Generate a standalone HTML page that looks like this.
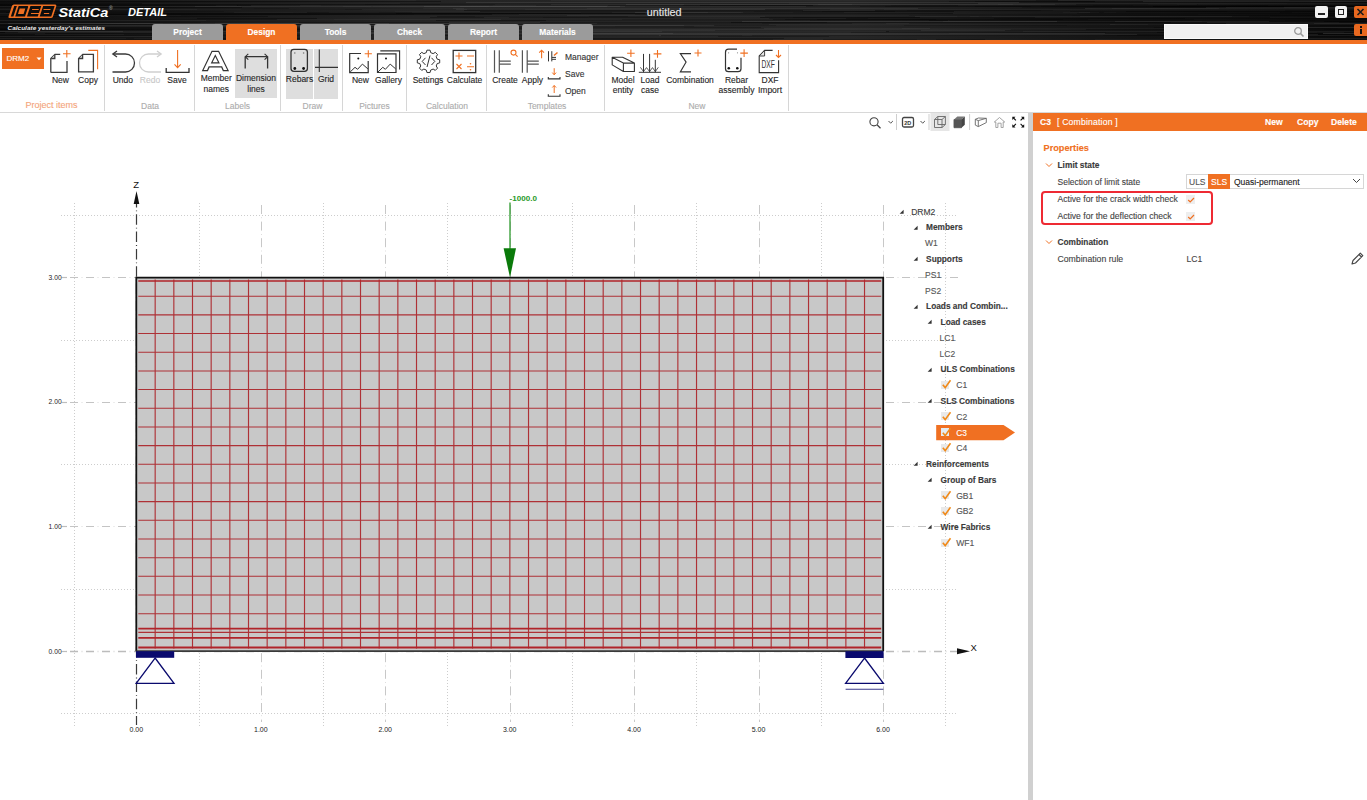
<!DOCTYPE html>
<html><head><meta charset="utf-8">
<style>
*{margin:0;padding:0;box-sizing:border-box}
html,body{width:1367px;height:800px;overflow:hidden;background:#fff;font-family:"Liberation Sans",sans-serif;color:#333}
.a{position:absolute}
.a div, div.a{-webkit-text-stroke:0.12px currentColor}
#title{left:0;top:0;width:1367px;height:40px;background:#1c1c1c;
 background-image:repeating-linear-gradient(180deg,rgba(255,255,255,0.06) 0px,rgba(255,255,255,0.0) 1px,rgba(0,0,0,0.25) 2px,rgba(255,255,255,0.04) 3px);}
#ostrip{left:0;top:40px;width:1367px;height:4px;background:#f07022}
.tab{top:24px;height:16px;width:71px;background:#9b9b9b;border-radius:3px 3px 0 0;color:#fff;font-weight:bold;font-size:8.4px;text-align:center;line-height:16.5px}
.tab.on{background:#f07022}
#ribbon{left:0;top:44px;width:1367px;height:68px;background:#fff}
.sep{top:45px;width:1px;height:65px;background:#d8d8d8}
.glab{top:100px;font-size:8.5px;color:#a8a8a8;text-align:center;height:11px;line-height:11px}
.bl{font-size:8.6px;color:#333;text-align:center;line-height:10.5px;white-space:nowrap}
.hl{background:#dedede}
#panelsep{left:1028px;top:112px;width:5px;height:688px;background:#cfcfcf}
#phead{left:1033px;top:113px;width:334px;height:18px;background:#f07022;color:#fff;font-size:8.6px;line-height:18px}
.pt{font-size:8.6px;color:#3a3a3a;white-space:nowrap;line-height:12px}
.pb{font-size:8.6px;font-weight:bold;color:#3a3a3a;white-space:nowrap;line-height:12px}
.tr{font-size:8.6px;color:#444;white-space:nowrap;line-height:12px}
.trb{font-size:8.6px;font-weight:bold;color:#3d3d3d;white-space:nowrap;line-height:12px}
</style></head><body>
<svg class="a" style="left:0;top:0" width="1367" height="40"><defs><linearGradient id="env" x1="0" x2="1" y1="0" y2="0"><stop offset="0" stop-color="#0e0e0e"/><stop offset="0.12" stop-color="#161616"/><stop offset="0.3" stop-color="#242424"/><stop offset="0.62" stop-color="#262626"/><stop offset="0.8" stop-color="#151515"/><stop offset="1" stop-color="#0a0a0a"/></linearGradient></defs><rect width="1367" height="40" fill="url(#env)"/><path d="M1285 20.5h325" stroke="#000" stroke-opacity="0.35"/><path d="M373 6.5h116" stroke="#fff" stroke-opacity="0.02"/><path d="M455 27.5h229" stroke="#fff" stroke-opacity="0.02"/><path d="M-6 36.5h218" stroke="#fff" stroke-opacity="0.08"/><path d="M718 36.5h111" stroke="#000" stroke-opacity="0.27"/><path d="M254 8.5h169" stroke="#000" stroke-opacity="0.19"/><path d="M-39 11.5h434" stroke="#000" stroke-opacity="0.13"/><path d="M684 4.5h464" stroke="#000" stroke-opacity="0.26"/><path d="M530 20.5h653" stroke="#000" stroke-opacity="0.17"/><path d="M895 11.5h231" stroke="#fff" stroke-opacity="0.05"/><path d="M943 21.5h259" stroke="#fff" stroke-opacity="0.03"/><path d="M58 26.5h292" stroke="#fff" stroke-opacity="0.05"/><path d="M998 4.5h435" stroke="#fff" stroke-opacity="0.04"/><path d="M731 22.5h440" stroke="#000" stroke-opacity="0.35"/><path d="M543 17.5h492" stroke="#000" stroke-opacity="0.31"/><path d="M1356 36.5h590" stroke="#000" stroke-opacity="0.22"/><path d="M-165 22.5h366" stroke="#000" stroke-opacity="0.14"/><path d="M142 3.5h258" stroke="#fff" stroke-opacity="0.04"/><path d="M-74 31.5h358" stroke="#fff" stroke-opacity="0.07"/><path d="M1154 27.5h253" stroke="#000" stroke-opacity="0.21"/><path d="M1301 24.5h174" stroke="#000" stroke-opacity="0.17"/><path d="M-181 14.5h595" stroke="#000" stroke-opacity="0.18"/><path d="M456 9.5h309" stroke="#fff" stroke-opacity="0.08"/><path d="M1289 32.5h486" stroke="#fff" stroke-opacity="0.05"/><path d="M415 35.5h327" stroke="#000" stroke-opacity="0.29"/><path d="M99 3.5h690" stroke="#000" stroke-opacity="0.13"/><path d="M-118 38.5h80" stroke="#000" stroke-opacity="0.13"/><path d="M762 23.5h124" stroke="#000" stroke-opacity="0.21"/><path d="M1297 16.5h453" stroke="#000" stroke-opacity="0.13"/><path d="M1356 31.5h369" stroke="#000" stroke-opacity="0.13"/><path d="M975 6.5h539" stroke="#000" stroke-opacity="0.31"/><path d="M-164 33.5h670" stroke="#fff" stroke-opacity="0.03"/><path d="M1232 34.5h550" stroke="#000" stroke-opacity="0.29"/><path d="M891 5.5h242" stroke="#000" stroke-opacity="0.15"/><path d="M635 14.5h563" stroke="#000" stroke-opacity="0.17"/><path d="M1063 12.5h587" stroke="#fff" stroke-opacity="0.03"/><path d="M572 33.5h533" stroke="#fff" stroke-opacity="0.07"/><path d="M206 30.5h509" stroke="#fff" stroke-opacity="0.05"/><path d="M1296 22.5h306" stroke="#000" stroke-opacity="0.17"/><path d="M329 12.5h379" stroke="#fff" stroke-opacity="0.06"/><path d="M551 0.5h485" stroke="#fff" stroke-opacity="0.03"/><path d="M1226 7.5h565" stroke="#fff" stroke-opacity="0.05"/><path d="M480 11.5h474" stroke="#000" stroke-opacity="0.38"/><path d="M526 25.5h541" stroke="#000" stroke-opacity="0.15"/><path d="M-157 8.5h446" stroke="#000" stroke-opacity="0.30"/><path d="M1095 39.5h688" stroke="#fff" stroke-opacity="0.04"/><path d="M659 35.5h93" stroke="#fff" stroke-opacity="0.06"/><path d="M625 6.5h659" stroke="#000" stroke-opacity="0.36"/><path d="M-156 13.5h212" stroke="#fff" stroke-opacity="0.07"/><path d="M206 20.5h340" stroke="#000" stroke-opacity="0.37"/><path d="M1207 22.5h491" stroke="#fff" stroke-opacity="0.05"/><path d="M5 32.5h174" stroke="#fff" stroke-opacity="0.07"/><path d="M754 11.5h561" stroke="#000" stroke-opacity="0.14"/><path d="M936 39.5h425" stroke="#000" stroke-opacity="0.26"/><path d="M556 35.5h561" stroke="#fff" stroke-opacity="0.02"/><path d="M234 12.5h559" stroke="#fff" stroke-opacity="0.05"/><path d="M495 4.5h460" stroke="#fff" stroke-opacity="0.05"/><path d="M509 17.5h411" stroke="#000" stroke-opacity="0.38"/><path d="M1174 33.5h664" stroke="#000" stroke-opacity="0.27"/><path d="M1116 12.5h165" stroke="#000" stroke-opacity="0.23"/><path d="M852 4.5h346" stroke="#000" stroke-opacity="0.19"/><path d="M1206 7.5h176" stroke="#fff" stroke-opacity="0.06"/><path d="M197 9.5h165" stroke="#000" stroke-opacity="0.32"/><path d="M424 6.5h382" stroke="#fff" stroke-opacity="0.07"/><path d="M907 10.5h696" stroke="#000" stroke-opacity="0.23"/><path d="M299 22.5h528" stroke="#000" stroke-opacity="0.27"/><path d="M902 28.5h318" stroke="#fff" stroke-opacity="0.04"/><path d="M-23 4.5h649" stroke="#000" stroke-opacity="0.36"/><path d="M216 5.5h105" stroke="#fff" stroke-opacity="0.04"/><path d="M1085 8.5h607" stroke="#fff" stroke-opacity="0.08"/><path d="M34 25.5h650" stroke="#fff" stroke-opacity="0.06"/><path d="M237 5.5h576" stroke="#000" stroke-opacity="0.37"/><path d="M1270 17.5h473" stroke="#fff" stroke-opacity="0.03"/><path d="M-96 14.5h615" stroke="#000" stroke-opacity="0.20"/><path d="M455 35.5h648" stroke="#fff" stroke-opacity="0.02"/><path d="M1270 15.5h681" stroke="#000" stroke-opacity="0.15"/><path d="M785 19.5h409" stroke="#000" stroke-opacity="0.23"/><path d="M224 11.5h578" stroke="#fff" stroke-opacity="0.02"/><path d="M949 1.5h422" stroke="#000" stroke-opacity="0.24"/><path d="M-33 28.5h588" stroke="#000" stroke-opacity="0.25"/><path d="M1320 25.5h271" stroke="#000" stroke-opacity="0.17"/><path d="M1104 12.5h518" stroke="#fff" stroke-opacity="0.04"/><path d="M1339 22.5h599" stroke="#000" stroke-opacity="0.29"/><path d="M475 16.5h114" stroke="#fff" stroke-opacity="0.04"/><path d="M851 32.5h255" stroke="#000" stroke-opacity="0.19"/><path d="M90 29.5h247" stroke="#000" stroke-opacity="0.21"/><path d="M1324 21.5h419" stroke="#000" stroke-opacity="0.39"/><path d="M141 19.5h193" stroke="#000" stroke-opacity="0.13"/><path d="M588 17.5h205" stroke="#fff" stroke-opacity="0.02"/><path d="M1080 16.5h169" stroke="#fff" stroke-opacity="0.04"/><path d="M277 19.5h224" stroke="#fff" stroke-opacity="0.05"/><path d="M830 9.5h524" stroke="#fff" stroke-opacity="0.04"/><path d="M929 20.5h386" stroke="#000" stroke-opacity="0.29"/><path d="M-131 9.5h598" stroke="#fff" stroke-opacity="0.06"/><path d="M18 32.5h405" stroke="#fff" stroke-opacity="0.07"/><path d="M1095 1.5h442" stroke="#fff" stroke-opacity="0.06"/><path d="M-67 14.5h106" stroke="#fff" stroke-opacity="0.08"/><path d="M1110 24.5h426" stroke="#fff" stroke-opacity="0.06"/><path d="M567 15.5h82" stroke="#fff" stroke-opacity="0.06"/><path d="M1207 32.5h137" stroke="#fff" stroke-opacity="0.06"/><path d="M195 30.5h126" stroke="#000" stroke-opacity="0.32"/><path d="M162 13.5h483" stroke="#000" stroke-opacity="0.35"/><path d="M551 4.5h504" stroke="#fff" stroke-opacity="0.06"/><path d="M-79 12.5h171" stroke="#000" stroke-opacity="0.32"/><path d="M773 19.5h163" stroke="#000" stroke-opacity="0.25"/><path d="M885 6.5h499" stroke="#000" stroke-opacity="0.25"/><path d="M530 29.5h556" stroke="#fff" stroke-opacity="0.05"/><path d="M1333 19.5h660" stroke="#000" stroke-opacity="0.24"/><path d="M1317 32.5h359" stroke="#000" stroke-opacity="0.16"/><path d="M-83 13.5h136" stroke="#fff" stroke-opacity="0.04"/><path d="M8 23.5h589" stroke="#fff" stroke-opacity="0.07"/><path d="M163 23.5h637" stroke="#000" stroke-opacity="0.11"/><path d="M1289 0.5h503" stroke="#000" stroke-opacity="0.32"/><path d="M339 26.5h276" stroke="#fff" stroke-opacity="0.02"/><path d="M1115 21.5h154" stroke="#fff" stroke-opacity="0.06"/><path d="M197 18.5h120" stroke="#000" stroke-opacity="0.36"/><path d="M365 4.5h345" stroke="#000" stroke-opacity="0.11"/><path d="M-119 6.5h490" stroke="#fff" stroke-opacity="0.03"/><path d="M484 17.5h276" stroke="#fff" stroke-opacity="0.07"/><path d="M1186 27.5h583" stroke="#fff" stroke-opacity="0.07"/><path d="M661 35.5h526" stroke="#000" stroke-opacity="0.32"/><path d="M764 28.5h166" stroke="#fff" stroke-opacity="0.05"/><path d="M-1 35.5h373" stroke="#000" stroke-opacity="0.19"/><path d="M437 16.5h228" stroke="#000" stroke-opacity="0.30"/><path d="M62 7.5h180" stroke="#000" stroke-opacity="0.37"/><path d="M662 31.5h361" stroke="#000" stroke-opacity="0.33"/><path d="M19 27.5h199" stroke="#000" stroke-opacity="0.20"/><path d="M300 5.5h308" stroke="#fff" stroke-opacity="0.03"/><path d="M975 1.5h336" stroke="#000" stroke-opacity="0.26"/><path d="M223 24.5h546" stroke="#000" stroke-opacity="0.27"/><path d="M-3 23.5h392" stroke="#fff" stroke-opacity="0.07"/><path d="M-55 13.5h636" stroke="#000" stroke-opacity="0.29"/><path d="M1295 27.5h606" stroke="#fff" stroke-opacity="0.02"/><path d="M466 2.5h553" stroke="#fff" stroke-opacity="0.08"/><path d="M-200 31.5h323" stroke="#fff" stroke-opacity="0.07"/><path d="M1324 29.5h234" stroke="#000" stroke-opacity="0.15"/><path d="M1323 33.5h148" stroke="#fff" stroke-opacity="0.06"/><path d="M-67 29.5h562" stroke="#000" stroke-opacity="0.14"/><path d="M1242 36.5h480" stroke="#000" stroke-opacity="0.14"/><path d="M628 16.5h351" stroke="#fff" stroke-opacity="0.03"/><path d="M622 19.5h441" stroke="#000" stroke-opacity="0.17"/><path d="M-198 38.5h413" stroke="#fff" stroke-opacity="0.04"/><path d="M810 20.5h628" stroke="#000" stroke-opacity="0.17"/><path d="M-154 15.5h335" stroke="#fff" stroke-opacity="0.02"/><path d="M581 12.5h498" stroke="#000" stroke-opacity="0.18"/><path d="M1250 27.5h221" stroke="#000" stroke-opacity="0.20"/><path d="M368 26.5h326" stroke="#000" stroke-opacity="0.19"/><path d="M-94 32.5h387" stroke="#000" stroke-opacity="0.33"/><path d="M162 12.5h217" stroke="#fff" stroke-opacity="0.04"/><path d="M577 39.5h196" stroke="#000" stroke-opacity="0.23"/><path d="M1287 3.5h171" stroke="#000" stroke-opacity="0.16"/><path d="M22 38.5h112" stroke="#000" stroke-opacity="0.22"/><path d="M948 20.5h698" stroke="#fff" stroke-opacity="0.04"/><path d="M822 11.5h405" stroke="#000" stroke-opacity="0.19"/><path d="M1115 24.5h691" stroke="#000" stroke-opacity="0.13"/><path d="M238 5.5h298" stroke="#fff" stroke-opacity="0.03"/><path d="M396 13.5h557" stroke="#000" stroke-opacity="0.34"/><path d="M-123 5.5h374" stroke="#000" stroke-opacity="0.38"/><path d="M307 12.5h537" stroke="#000" stroke-opacity="0.29"/><path d="M1072 15.5h555" stroke="#000" stroke-opacity="0.11"/><path d="M1059 4.5h118" stroke="#000" stroke-opacity="0.12"/><path d="M331 38.5h249" stroke="#fff" stroke-opacity="0.06"/><path d="M970 16.5h508" stroke="#fff" stroke-opacity="0.04"/><path d="M1236 38.5h473" stroke="#fff" stroke-opacity="0.02"/><path d="M-32 14.5h524" stroke="#000" stroke-opacity="0.33"/><path d="M1232 16.5h585" stroke="#000" stroke-opacity="0.25"/><path d="M1058 0.5h538" stroke="#fff" stroke-opacity="0.07"/><path d="M170 38.5h614" stroke="#000" stroke-opacity="0.34"/><path d="M-76 38.5h202" stroke="#fff" stroke-opacity="0.03"/><path d="M818 4.5h379" stroke="#fff" stroke-opacity="0.03"/><path d="M1184 27.5h692" stroke="#000" stroke-opacity="0.13"/><path d="M460 6.5h693" stroke="#fff" stroke-opacity="0.03"/><path d="M453 8.5h465" stroke="#fff" stroke-opacity="0.06"/><path d="M1022 7.5h262" stroke="#000" stroke-opacity="0.18"/><path d="M957 16.5h203" stroke="#000" stroke-opacity="0.17"/><path d="M241 9.5h643" stroke="#000" stroke-opacity="0.12"/><path d="M1355 16.5h395" stroke="#000" stroke-opacity="0.34"/><path d="M1353 29.5h143" stroke="#000" stroke-opacity="0.35"/><path d="M1233 28.5h105" stroke="#000" stroke-opacity="0.14"/><path d="M741 12.5h593" stroke="#000" stroke-opacity="0.12"/><path d="M1157 32.5h358" stroke="#000" stroke-opacity="0.33"/><path d="M-34 0.5h450" stroke="#fff" stroke-opacity="0.03"/><path d="M333 23.5h107" stroke="#fff" stroke-opacity="0.02"/><path d="M1077 13.5h588" stroke="#000" stroke-opacity="0.21"/><path d="M289 39.5h206" stroke="#fff" stroke-opacity="0.05"/><path d="M440 4.5h573" stroke="#fff" stroke-opacity="0.03"/><path d="M-57 34.5h181" stroke="#fff" stroke-opacity="0.04"/><path d="M846 18.5h339" stroke="#000" stroke-opacity="0.32"/><path d="M449 22.5h91" stroke="#fff" stroke-opacity="0.07"/><path d="M412 12.5h331" stroke="#fff" stroke-opacity="0.05"/><path d="M464 10.5h589" stroke="#000" stroke-opacity="0.36"/><path d="M1011 29.5h161" stroke="#000" stroke-opacity="0.14"/><path d="M-60 25.5h466" stroke="#000" stroke-opacity="0.25"/><path d="M345 9.5h180" stroke="#000" stroke-opacity="0.12"/><path d="M569 24.5h579" stroke="#fff" stroke-opacity="0.03"/><path d="M1112 8.5h107" stroke="#fff" stroke-opacity="0.04"/><path d="M1251 38.5h320" stroke="#fff" stroke-opacity="0.06"/><path d="M803 10.5h611" stroke="#fff" stroke-opacity="0.06"/><path d="M1099 12.5h193" stroke="#000" stroke-opacity="0.22"/><path d="M45 33.5h303" stroke="#000" stroke-opacity="0.39"/><path d="M-136 12.5h429" stroke="#fff" stroke-opacity="0.02"/><path d="M-16 20.5h452" stroke="#fff" stroke-opacity="0.06"/><path d="M817 19.5h271" stroke="#000" stroke-opacity="0.22"/><path d="M500 23.5h352" stroke="#000" stroke-opacity="0.29"/><path d="M529 31.5h357" stroke="#fff" stroke-opacity="0.07"/><path d="M1070 11.5h328" stroke="#000" stroke-opacity="0.21"/><path d="M-56 23.5h354" stroke="#fff" stroke-opacity="0.02"/><path d="M-71 8.5h535" stroke="#fff" stroke-opacity="0.05"/><path d="M978 3.5h635" stroke="#fff" stroke-opacity="0.07"/><path d="M1143 1.5h698" stroke="#fff" stroke-opacity="0.07"/><path d="M6 12.5h629" stroke="#000" stroke-opacity="0.34"/><path d="M875 10.5h527" stroke="#000" stroke-opacity="0.35"/><path d="M985 39.5h178" stroke="#fff" stroke-opacity="0.04"/><path d="M25 29.5h391" stroke="#fff" stroke-opacity="0.03"/><path d="M765 16.5h227" stroke="#000" stroke-opacity="0.16"/><path d="M53 25.5h661" stroke="#fff" stroke-opacity="0.07"/><path d="M1041 10.5h244" stroke="#fff" stroke-opacity="0.02"/><path d="M1314 23.5h361" stroke="#fff" stroke-opacity="0.06"/><path d="M195 6.5h412" stroke="#fff" stroke-opacity="0.06"/><path d="M215 23.5h694" stroke="#fff" stroke-opacity="0.04"/><path d="M493 5.5h190" stroke="#fff" stroke-opacity="0.02"/><path d="M197 33.5h476" stroke="#fff" stroke-opacity="0.06"/><path d="M949 20.5h543" stroke="#000" stroke-opacity="0.19"/><path d="M455 27.5h306" stroke="#000" stroke-opacity="0.25"/><path d="M823 39.5h94" stroke="#000" stroke-opacity="0.21"/><path d="M620 6.5h411" stroke="#000" stroke-opacity="0.19"/><path d="M120 8.5h467" stroke="#000" stroke-opacity="0.14"/><path d="M909 15.5h360" stroke="#000" stroke-opacity="0.14"/><path d="M430 17.5h244" stroke="#000" stroke-opacity="0.29"/><path d="M1199 35.5h449" stroke="#fff" stroke-opacity="0.06"/><path d="M949 33.5h234" stroke="#fff" stroke-opacity="0.02"/><path d="M-160 34.5h195" stroke="#000" stroke-opacity="0.37"/><path d="M-181 6.5h422" stroke="#fff" stroke-opacity="0.03"/><path d="M612 12.5h478" stroke="#fff" stroke-opacity="0.04"/><path d="M74 39.5h272" stroke="#000" stroke-opacity="0.11"/><path d="M921 30.5h84" stroke="#fff" stroke-opacity="0.06"/><path d="M-74 29.5h486" stroke="#000" stroke-opacity="0.40"/><path d="M164 16.5h104" stroke="#000" stroke-opacity="0.32"/><path d="M915 16.5h245" stroke="#fff" stroke-opacity="0.05"/><path d="M1323 33.5h263" stroke="#fff" stroke-opacity="0.07"/><path d="M1179 5.5h89" stroke="#000" stroke-opacity="0.17"/><path d="M1280 12.5h543" stroke="#000" stroke-opacity="0.36"/><path d="M742 21.5h315" stroke="#fff" stroke-opacity="0.08"/><path d="M536 34.5h601" stroke="#fff" stroke-opacity="0.07"/><path d="M1298 27.5h225" stroke="#fff" stroke-opacity="0.07"/><path d="M776 25.5h128" stroke="#fff" stroke-opacity="0.03"/><path d="M-25 1.5h466" stroke="#000" stroke-opacity="0.39"/><path d="M-152 1.5h166" stroke="#fff" stroke-opacity="0.02"/><path d="M955 4.5h121" stroke="#fff" stroke-opacity="0.04"/><path d="M1197 34.5h121" stroke="#fff" stroke-opacity="0.07"/><path d="M-32 24.5h208" stroke="#000" stroke-opacity="0.11"/><path d="M1093 5.5h472" stroke="#000" stroke-opacity="0.13"/><path d="M1041 6.5h481" stroke="#000" stroke-opacity="0.20"/><path d="M-167 16.5h239" stroke="#000" stroke-opacity="0.31"/><path d="M1226 23.5h557" stroke="#fff" stroke-opacity="0.05"/><path d="M769 18.5h99" stroke="#000" stroke-opacity="0.23"/><path d="M343 6.5h517" stroke="#fff" stroke-opacity="0.03"/><path d="M700 5.5h258" stroke="#000" stroke-opacity="0.26"/><path d="M994 18.5h686" stroke="#000" stroke-opacity="0.25"/><path d="M889 31.5h592" stroke="#fff" stroke-opacity="0.06"/></svg>

<svg class="a" style="left:0;top:0" width="200" height="40">
 <g transform="skewX(-18)" fill="#0d0d0d">
  <rect x="13.85" y="4.6" width="44.45" height="13.4" rx="1.6" fill="#f07022"/>
  <rect x="16.2" y="6" width="2.6" height="10.6"/>
  <path d="M20.6 6h8.8a1 1 0 0 1 1 1v9.6H20.6z M22.5 8.6v5.3h5.6V8.6z" fill-rule="evenodd"/>
  <path d="M32.4 6h10.8v10.6H32.4z M35.2 9v1.1h6.6V9z M35.4 13v1.1h7.8V13z" fill-rule="evenodd"/>
  <path d="M45.1 6h11.5v10.6H45.1z M46.6 9v1.1h7V9z M48.3 13v1.1h5.3V13z" fill-rule="evenodd"/>
 </g>
 <text x="58.4" y="16.7" font-family="Liberation Sans" font-weight="bold" font-style="italic" font-size="13.6" fill="#fff" textLength="50" lengthAdjust="spacingAndGlyphs">StatiCa</text>
 <text x="109" y="10" font-family="Liberation Sans" font-size="5" fill="#bbb">®</text>
 <text x="128" y="15.8" font-family="Liberation Sans" font-weight="bold" font-style="italic" font-size="10.5" fill="#fff" textLength="39" lengthAdjust="spacingAndGlyphs">DETAIL</text>
 <text x="7.5" y="29.6" font-family="Liberation Sans" font-weight="bold" font-style="italic" font-size="6" fill="#e8e8e8" textLength="97.5" lengthAdjust="spacingAndGlyphs">Calculate yesterday's estimates</text>
</svg>
<div class="a" style="left:646.8px;top:5.8px;font-size:10.8px;color:#e6e6e6;line-height:13px">untitled</div>
<div class="a tab" style="left:152px">Project</div>
<div class="a tab on" style="left:226px">Design</div>
<div class="a tab" style="left:300px">Tools</div>
<div class="a tab" style="left:374px">Check</div>
<div class="a tab" style="left:448px">Report</div>
<div class="a tab" style="left:522px">Materials</div>
<div class="a" style="left:1315px;top:6px;width:13px;height:12px;background:#f2f2f2;border-radius:2px"><div class="a" style="left:3px;top:7px;width:7px;height:2px;background:#222"></div></div>
<div class="a" style="left:1335px;top:6px;width:12px;height:12px;background:#f2f2f2;border-radius:2px"><div class="a" style="left:3px;top:3px;width:6px;height:6px;border:1.5px solid #222"></div></div>
<div class="a" style="left:1354px;top:6px;width:13px;height:12px;background:#e8681f;border-radius:2px 0 0 2px"><svg class="a" style="left:0;top:0" width="13" height="12"><path d="M3.5 3L9.5 9M9.5 3L3.5 9" stroke="#1a1a1a" stroke-width="1.6"/></svg></div>
<div class="a" style="left:1164px;top:24px;width:144px;height:15px;background:#f0f0f0;border:1px solid #fafafa"><svg class="a" style="left:128px;top:1px" width="12" height="12"><circle cx="5" cy="5" r="3.3" fill="none" stroke="#9a9a9a" stroke-width="1.3"/><path d="M7.5 7.5L10.5 10.5" stroke="#9a9a9a" stroke-width="1.6"/></svg></div>
<div class="a" style="left:1354px;top:24px;width:13px;height:12px;background:#e8681f;border-radius:2px 0 0 2px"><div class="a" style="left:5.5px;top:2px;width:2px;height:2px;background:#111"></div><div class="a" style="left:5.5px;top:5px;width:2px;height:5px;background:#111"></div></div>
<div id="ostrip" class="a"></div>
<div id="ribbon" class="a"></div>
<div class="a" style="left:235px;top:49px;width:42px;height:49px;background:#dedede"></div>
<div class="a" style="left:286px;top:49px;width:27px;height:50px;background:#dedede"></div>
<div class="a" style="left:314px;top:49px;width:24px;height:50px;background:#dedede"></div>
<div class="a" style="left:104px;top:45px;width:1px;height:66px;background:#d6d6d6"></div>
<div class="a" style="left:194px;top:45px;width:1px;height:66px;background:#d6d6d6"></div>
<div class="a" style="left:280px;top:45px;width:1px;height:66px;background:#d6d6d6"></div>
<div class="a" style="left:342px;top:45px;width:1px;height:66px;background:#d6d6d6"></div>
<div class="a" style="left:406px;top:45px;width:1px;height:66px;background:#d6d6d6"></div>
<div class="a" style="left:486px;top:45px;width:1px;height:66px;background:#d6d6d6"></div>
<div class="a" style="left:604px;top:45px;width:1px;height:66px;background:#d6d6d6"></div>
<div class="a" style="left:788px;top:45px;width:1px;height:66px;background:#d6d6d6"></div>
<div class="a" style="left:2px;top:48px;width:42px;height:21px;background:#f07022"></div>
<div class="a" style="left:6.5px;top:53.5px;font-size:8.0px;color:#fff;line-height:10.00px;white-space:nowrap;">DRM2</div>
<svg class="a" style="left:36px;top:57px" width="6" height="4"><path d="M0.5 0.5h5l-2.5 2.8z" fill="#fff"/></svg>
<div class="a" style="left:10.5px;top:74.5px;font-size:8.5px;color:#262626;line-height:10.62px;white-space:nowrap;width:100px;text-align:center;">New</div>
<div class="a" style="left:38px;top:74.5px;font-size:8.5px;color:#262626;line-height:10.62px;white-space:nowrap;width:100px;text-align:center;">Copy</div>
<div class="a" style="left:72.8px;top:74.5px;font-size:8.5px;color:#262626;line-height:10.62px;white-space:nowrap;width:100px;text-align:center;">Undo</div>
<div class="a" style="left:100px;top:74.5px;font-size:8.5px;color:#c8c8c8;line-height:10.62px;white-space:nowrap;width:100px;text-align:center;">Redo</div>
<div class="a" style="left:127px;top:74.5px;font-size:8.5px;color:#262626;line-height:10.62px;white-space:nowrap;width:100px;text-align:center;">Save</div>
<div class="a" style="left:166.3px;top:73px;font-size:8.5px;color:#262626;line-height:10.62px;white-space:nowrap;width:100px;text-align:center;">Member</div>
<div class="a" style="left:166.3px;top:84.2px;font-size:8.5px;color:#262626;line-height:10.62px;white-space:nowrap;width:100px;text-align:center;">names</div>
<div class="a" style="left:206px;top:73px;font-size:8.5px;color:#262626;line-height:10.62px;white-space:nowrap;width:100px;text-align:center;">Dimension</div>
<div class="a" style="left:206px;top:84.2px;font-size:8.5px;color:#262626;line-height:10.62px;white-space:nowrap;width:100px;text-align:center;">lines</div>
<div class="a" style="left:249.5px;top:73.5px;font-size:8.5px;color:#262626;line-height:10.62px;white-space:nowrap;width:100px;text-align:center;">Rebars</div>
<div class="a" style="left:276px;top:73.5px;font-size:8.5px;color:#262626;line-height:10.62px;white-space:nowrap;width:100px;text-align:center;">Grid</div>
<div class="a" style="left:310.5px;top:74.8px;font-size:8.5px;color:#262626;line-height:10.62px;white-space:nowrap;width:100px;text-align:center;">New</div>
<div class="a" style="left:338.5px;top:74.8px;font-size:8.5px;color:#262626;line-height:10.62px;white-space:nowrap;width:100px;text-align:center;">Gallery</div>
<div class="a" style="left:378px;top:75px;font-size:8.5px;color:#262626;line-height:10.62px;white-space:nowrap;width:100px;text-align:center;">Settings</div>
<div class="a" style="left:414.5px;top:75px;font-size:8.5px;color:#262626;line-height:10.62px;white-space:nowrap;width:100px;text-align:center;">Calculate</div>
<div class="a" style="left:455px;top:74.7px;font-size:8.5px;color:#262626;line-height:10.62px;white-space:nowrap;width:100px;text-align:center;">Create</div>
<div class="a" style="left:482.5px;top:74.7px;font-size:8.5px;color:#262626;line-height:10.62px;white-space:nowrap;width:100px;text-align:center;">Apply</div>
<div class="a" style="left:565px;top:52px;font-size:8.5px;color:#333;line-height:10.62px;white-space:nowrap;">Manager</div>
<div class="a" style="left:565px;top:69px;font-size:8.5px;color:#333;line-height:10.62px;white-space:nowrap;">Save</div>
<div class="a" style="left:565px;top:86px;font-size:8.5px;color:#333;line-height:10.62px;white-space:nowrap;">Open</div>
<div class="a" style="left:573px;top:74.5px;font-size:8.5px;color:#262626;line-height:10.62px;white-space:nowrap;width:100px;text-align:center;">Model</div>
<div class="a" style="left:573px;top:85.2px;font-size:8.5px;color:#262626;line-height:10.62px;white-space:nowrap;width:100px;text-align:center;">entity</div>
<div class="a" style="left:600px;top:74.5px;font-size:8.5px;color:#262626;line-height:10.62px;white-space:nowrap;width:100px;text-align:center;">Load</div>
<div class="a" style="left:600px;top:85.2px;font-size:8.5px;color:#262626;line-height:10.62px;white-space:nowrap;width:100px;text-align:center;">case</div>
<div class="a" style="left:640px;top:74.5px;font-size:8.5px;color:#262626;line-height:10.62px;white-space:nowrap;width:100px;text-align:center;">Combination</div>
<div class="a" style="left:686.5px;top:74.5px;font-size:8.5px;color:#262626;line-height:10.62px;white-space:nowrap;width:100px;text-align:center;">Rebar</div>
<div class="a" style="left:686.5px;top:85.2px;font-size:8.5px;color:#262626;line-height:10.62px;white-space:nowrap;width:100px;text-align:center;">assembly</div>
<div class="a" style="left:720px;top:74.5px;font-size:8.5px;color:#262626;line-height:10.62px;white-space:nowrap;width:100px;text-align:center;">DXF</div>
<div class="a" style="left:720px;top:85.2px;font-size:8.5px;color:#262626;line-height:10.62px;white-space:nowrap;width:100px;text-align:center;">Import</div>
<div class="a" style="left:1.5px;top:100.0px;font-size:9.0px;color:#f4a47a;line-height:11.25px;white-space:nowrap;width:100px;text-align:center;">Project items</div>
<div class="a" style="left:100px;top:100.5px;font-size:8.5px;color:#acacac;line-height:10.62px;white-space:nowrap;width:100px;text-align:center;">Data</div>
<div class="a" style="left:187.5px;top:100.5px;font-size:8.5px;color:#acacac;line-height:10.62px;white-space:nowrap;width:100px;text-align:center;">Labels</div>
<div class="a" style="left:262.5px;top:100.5px;font-size:8.5px;color:#acacac;line-height:10.62px;white-space:nowrap;width:100px;text-align:center;">Draw</div>
<div class="a" style="left:324.5px;top:100.5px;font-size:8.5px;color:#acacac;line-height:10.62px;white-space:nowrap;width:100px;text-align:center;">Pictures</div>
<div class="a" style="left:397px;top:100.5px;font-size:8.5px;color:#acacac;line-height:10.62px;white-space:nowrap;width:100px;text-align:center;">Calculation</div>
<div class="a" style="left:497px;top:100.5px;font-size:8.5px;color:#acacac;line-height:10.62px;white-space:nowrap;width:100px;text-align:center;">Templates</div>
<div class="a" style="left:647px;top:100.5px;font-size:8.5px;color:#acacac;line-height:10.62px;white-space:nowrap;width:100px;text-align:center;">New</div>
<svg class="a" style="left:0;top:44px" width="800" height="60" fill="none" stroke-linecap="butt">
<g stroke="#3c3c3c" stroke-width="1.3">
 <!-- New doc -->
 <path d="M50.8 28.4V14.6l4.2-4.3h5.2"/><path d="M50.8 28.4h16.2V17"/><path d="M51.2 14.5h3.6v-3.8" fill="#ddd"/>
 <!-- Copy doc -->
 <path d="M78.6 27.8V14.6l4.2-4.3h10.6v17.5z"/><path d="M79 14.5h3.6v-3.8" fill="#ddd"/>
</g>
<g stroke="#f07022" stroke-width="1.1">
 <path d="M66.8 6v7.6M63 9.8h7.6"/>
 <path d="M88.3 6.4h9.3v18.8"/>
</g>
<!-- Undo -->
<path d="M113 10h12.5a9 9 0 0 1 0 18H112.5" stroke="#3a3a3a" stroke-width="1.3"/>
<path d="M117 6.9l-4.2 3.1 4.2 3.1" stroke="#3a3a3a" stroke-width="1.3"/>
<!-- Redo -->
<path d="M161 10h-12.5a9 9 0 0 0 0 18H161" stroke="#cfcfcf" stroke-width="1.3"/>
<path d="M157 6.9l4.2 3.1-4.2 3.1" stroke="#cfcfcf" stroke-width="1.3"/>
<!-- Save -->
<path d="M177.6 6v17.5M174.5 20.3l3.1 3.4 3.1-3.4" stroke="#f07022" stroke-width="1.1"/>
<path d="M166.2 24v4.3h22.8V24" stroke="#333" stroke-width="1.3"/>
<!-- A -->
<path d="M212 7.3h6.6l9.5 19.3h-4.8l-1.6-3.7h-12.6l-1.6 3.7h-4.8z M211.7 18.8h7.2l-3.6-7.2z" stroke="#333" stroke-width="1.2"/>
<!-- Dimension -->
<path d="M245.2 12.7v11.8M267.6 12.7v11.8M245.2 12.7h22.4" stroke="#333" stroke-width="1.3"/>
<path d="M248.3 9.8l-3 2.9 3 2.9M264.6 9.8l3 2.9-3 2.9" stroke="#333" stroke-width="1.1"/>
<!-- Rebars -->
<rect x="291" y="5.3" width="16.4" height="22" rx="2.8" stroke="#333" stroke-width="1.3"/>
<circle cx="294.8" cy="9" r="0.8" fill="#777" stroke="none"/><circle cx="303.6" cy="9" r="0.8" fill="#777" stroke="none"/>
<circle cx="294.8" cy="24.5" r="1.4" fill="#111" stroke="none"/><circle cx="303.6" cy="24.5" r="1.4" fill="#111" stroke="none"/>
<!-- Grid -->
<path d="M319.3 5.5v22.5M315 23.4h23" stroke="#333" stroke-width="1.1"/>
<!-- Picture New -->
<path d="M361 9.5h-11.3v19.2h18.5V17" stroke="#333" stroke-width="1.2"/>
<path d="M350.2 28l4.8-4.7 2.6 2 4.8-5.2 5.5 4.8" stroke="#333" stroke-width="1.0"/>
<circle cx="358.3" cy="14.5" r="1" fill="#111" stroke="none"/>
<path d="M368.3 6.2v7.2M364.7 9.8h7.2" stroke="#f07022" stroke-width="1.1"/>
<path d="M377.5 9.8h18.5v18.7h-18.5z" stroke="#333" stroke-width="1.2"/>
<path d="M380.3 6.9h19.3v18.7" stroke="#333" stroke-width="1.1"/>
<path d="M378 28l4.8-4.7 2.6 2 4.8-5.2 5.5 4.8" stroke="#333" stroke-width="1.0"/>
<circle cx="386" cy="14.5" r="1" fill="#111" stroke="none"/>
<!-- Settings gear -->
<path d="M437.23 15.17 L439.69 15.78 L439.69 18.92 L437.23 19.53 L436.21 21.99 L437.52 24.15 L435.30 26.37 L433.14 25.06 L430.68 26.08 L430.07 28.54 L426.93 28.54 L426.32 26.08 L423.86 25.06 L421.70 26.37 L419.48 24.15 L420.79 21.99 L419.77 19.53 L417.31 18.92 L417.31 15.78 L419.77 15.17 L420.79 12.71 L419.48 10.55 L421.70 8.33 L423.86 9.64 L426.32 8.62 L426.93 6.16 L430.07 6.16 L430.68 8.62 L433.14 9.64 L435.30 8.33 L437.52 10.55 L436.21 12.71Z" stroke="#333" stroke-width="1.0" stroke-linejoin="round"/>
<path d="M425.5 13.8l-3.3 3.6 3.3 3.6M431.5 13.8l3.3 3.6-3.3 3.6M430 11.5l-3 11.5" stroke="#333" stroke-width="1.0"/>
<!-- Calculate -->
<rect x="453.2" y="6.4" width="22.5" height="22.2" stroke="#333" stroke-width="1.3"/>
<path d="M455.5 12h7M459 8.5v7M467 12h7M456.5 20l5 5M461.5 20l-5 5M467 22.7h7" stroke="#f07022" stroke-width="1.1"/>
<circle cx="470.5" cy="19.8" r="0.8" fill="#f07022" stroke="none"/><circle cx="470.5" cy="25.8" r="0.8" fill="#f07022" stroke="none"/>
<!-- Create -->
<path d="M494.5 6.2v22.5M499.3 6.2v22.5M499.3 17.2h11.5M499.3 20.2h11.5" stroke="#555" stroke-width="1.2"/>
<circle cx="513.5" cy="8.6" r="2.5" stroke="#f07022" stroke-width="1.1"/><path d="M515.3 10.4l2.3 2.3" stroke="#f07022" stroke-width="1.1"/>
<!-- Apply -->
<path d="M522.4 6.2v22.5M527.2 6.2v22.5M527.2 17.2h11.6M527.2 20.2h11.6" stroke="#555" stroke-width="1.2"/>
<path d="M541.6 14.3V6.2M539.2 8.6l2.4-2.4 2.4 2.4" stroke="#f07022" stroke-width="1.1"/>
<!-- Manager small -->
<path d="M548.5 7.2v10.2M551.8 7.2v10.2M551.8 13.4h4.2M551.8 15.3h4.2" stroke="#333" stroke-width="1.0"/>
<path d="M554 11.5l3.5-3" stroke="#f07022" stroke-width="1.5"/>
<!-- Save small -->
<path d="M554.2 24.2v6.5M552.3 28.6l1.9 2.2 1.9-2.2" stroke="#f07022" stroke-width="1.0"/>
<path d="M548.3 33v1.9h11.7v-1.9" stroke="#333" stroke-width="1.1"/>
<!-- Open small -->
<path d="M554.2 49v-7.5M552.3 43.5l1.9-2 1.9 2" stroke="#f07022" stroke-width="1.0"/>
<path d="M548.3 50.3v1.9h11.7v-1.9" stroke="#333" stroke-width="1.1"/>
<!-- Model entity box -->
<path d="M612.2 13.2H622.6L634.4 19.1V27.5H623.4L612.2 20.9Z M612.2 13.2L623.4 19.1V27.5 M623.4 19.1H634.4" stroke="#333" stroke-width="1.1" stroke-linejoin="round"/>
<path d="M630.9 5.4v7.6M627.1 9.2h7.6" stroke="#f07022" stroke-width="1.1"/>
<!-- Load case -->
<path d="M643.5 9.9v18.4M649.6 9.9v18.4M655.3 15.8v12.5M638.8 28.3h22.2" stroke="#333" stroke-width="1.0"/>
<path d="M640.4 23.3L643.5 27.6L646.5 23.6L649.6 27.6L652.5 23.6L655.3 27.6L658.3 23.3" stroke="#333" stroke-width="0.8"/>
<path d="M657.5 6v7.8M653.6 9.9h7.8" stroke="#f07022" stroke-width="1.1"/>
<!-- Sigma -->
<path d="M691 9.6h-10.7l5.8 8.5-5.8 9.8h10.7" stroke="#333" stroke-width="1.1"/>
<path d="M698 5.5v7M694.5 9h7" stroke="#f07022" stroke-width="1.1"/>
<!-- Rebar assembly -->
<path d="M737 5.2h-8.5a3 3 0 0 0-3 3v16.5a3 3 0 0 0 3 3h9.5a3 3 0 0 0 3-3V13.8" stroke="#333" stroke-width="1.2"/>
<circle cx="728.6" cy="8.8" r="0.6" fill="#888" stroke="none"/><circle cx="737.5" cy="8.8" r="0.6" fill="#888" stroke="none"/>
<circle cx="728.8" cy="24.3" r="1.3" fill="#111" stroke="none"/><circle cx="737.3" cy="24.3" r="1.3" fill="#111" stroke="none"/>
<path d="M744.1 5.3v7.6M740.3 9.1h7.6" stroke="#f07022" stroke-width="1.1"/>
<!-- DXF -->
<path d="M772.6 6.4H764.6L759.2 11.9V28.6H778.6V16.3" stroke="#333" stroke-width="1.1"/>
<path d="M764.6 6.4V12H759.2z" fill="#e6e6e6" stroke="#333" stroke-width="0.9"/>
<text x="761.4" y="23.7" font-family="Liberation Sans" font-size="10.2" fill="#333" stroke="none" textLength="13.4" lengthAdjust="spacingAndGlyphs">DXF</text>
<path d="M778.5 6v7.5M776 11l2.5 2.5 2.5-2.5" stroke="#f07022" stroke-width="1.1"/>
</svg>
<svg class="a" style="left:0;top:113px" width="1028" height="687"><g transform="translate(0,-113)"><path d="M74.5 203V726" stroke="#cdcdcd" stroke-width="1" stroke-dasharray="1 2"/><path d="M199.5 203V726" stroke="#cdcdcd" stroke-width="1" stroke-dasharray="1 2"/><path d="M323.5 203V726" stroke="#cdcdcd" stroke-width="1" stroke-dasharray="1 2"/><path d="M447.5 203V726" stroke="#cdcdcd" stroke-width="1" stroke-dasharray="1 2"/><path d="M572.5 203V726" stroke="#cdcdcd" stroke-width="1" stroke-dasharray="1 2"/><path d="M696.5 203V726" stroke="#cdcdcd" stroke-width="1" stroke-dasharray="1 2"/><path d="M821.5 203V726" stroke="#cdcdcd" stroke-width="1" stroke-dasharray="1 2"/><path d="M945.5 203V726" stroke="#cdcdcd" stroke-width="1" stroke-dasharray="1 2"/><path d="M61 713.5H958" stroke="#cdcdcd" stroke-width="1" stroke-dasharray="1 2"/><path d="M61 589.5H958" stroke="#cdcdcd" stroke-width="1" stroke-dasharray="1 2"/><path d="M61 464.5H958" stroke="#cdcdcd" stroke-width="1" stroke-dasharray="1 2"/><path d="M61 340.5H958" stroke="#cdcdcd" stroke-width="1" stroke-dasharray="1 2"/><path d="M61 215.5H958" stroke="#cdcdcd" stroke-width="1" stroke-dasharray="1 2"/><path d="M261.5 205V722" stroke="#c8c8c8" stroke-width="1" stroke-dasharray="9 3.5 0.6 3.5"/><path d="M385.5 205V722" stroke="#c8c8c8" stroke-width="1" stroke-dasharray="9 3.5 0.6 3.5"/><path d="M510.5 205V722" stroke="#c8c8c8" stroke-width="1" stroke-dasharray="9 3.5 0.6 3.5"/><path d="M634.5 205V722" stroke="#c8c8c8" stroke-width="1" stroke-dasharray="9 3.5 0.6 3.5"/><path d="M759.5 205V722" stroke="#c8c8c8" stroke-width="1" stroke-dasharray="9 3.5 0.6 3.5"/><path d="M883.5 205V722" stroke="#c8c8c8" stroke-width="1" stroke-dasharray="9 3.5 0.6 3.5"/><path d="M66 526.5H958" stroke="#c4c4c4" stroke-width="1.2" stroke-dasharray="8 3.7 0.6 3.7" stroke-dashoffset="-4"/><path d="M61.5 526.5H67" stroke="#bdbdbd" stroke-width="1.2"/><path d="M66 402.5H958" stroke="#c4c4c4" stroke-width="1.2" stroke-dasharray="8 3.7 0.6 3.7" stroke-dashoffset="-4"/><path d="M61.5 402.5H67" stroke="#bdbdbd" stroke-width="1.2"/><path d="M66 277.5H958" stroke="#c4c4c4" stroke-width="1.2" stroke-dasharray="8 3.7 0.6 3.7" stroke-dashoffset="-4"/><path d="M61.5 277.5H67" stroke="#bdbdbd" stroke-width="1.2"/><path d="M66 651.5H958" stroke="#bcbcbc" stroke-width="1.3" stroke-dasharray="8 3.7 0.6 3.7" stroke-dashoffset="-4"/><path d="M61.5 651.5H67" stroke="#bdbdbd" stroke-width="1.2"/><path d="M957 648.3L970 651.3L957 654.3z" fill="#111"/><text x="970.5" y="651" font-family="Liberation Sans" font-size="9.5" fill="#111">X</text><path d="M136.5 204V725" stroke="#3a3a3a" stroke-width="1.2" stroke-dasharray="10.5 3 0.8 3" stroke-dashoffset="7"/><path d="M133.7 204L136.5 191L139.3 204z" fill="#111"/><text x="133.2" y="188.3" font-family="Liberation Sans" font-size="9.5" fill="#111">Z</text><rect x="136.3" y="277.6" width="746.9000000000001" height="373.6" fill="#c8c8c8"/><path d="M155.17 279.5V648.5" stroke="#ae3136" stroke-width="1.15"/><path d="M173.84 279.5V648.5" stroke="#ae3136" stroke-width="1.15"/><path d="M192.50 279.5V648.5" stroke="#ae3136" stroke-width="1.15"/><path d="M211.17 279.5V648.5" stroke="#ae3136" stroke-width="1.15"/><path d="M229.84 279.5V648.5" stroke="#ae3136" stroke-width="1.15"/><path d="M248.50 279.5V648.5" stroke="#ae3136" stroke-width="1.15"/><path d="M267.17 279.5V648.5" stroke="#ae3136" stroke-width="1.15"/><path d="M285.84 279.5V648.5" stroke="#ae3136" stroke-width="1.15"/><path d="M304.51 279.5V648.5" stroke="#ae3136" stroke-width="1.15"/><path d="M323.18 279.5V648.5" stroke="#ae3136" stroke-width="1.15"/><path d="M341.84 279.5V648.5" stroke="#ae3136" stroke-width="1.15"/><path d="M360.51 279.5V648.5" stroke="#ae3136" stroke-width="1.15"/><path d="M379.18 279.5V648.5" stroke="#ae3136" stroke-width="1.15"/><path d="M397.85 279.5V648.5" stroke="#ae3136" stroke-width="1.15"/><path d="M416.51 279.5V648.5" stroke="#ae3136" stroke-width="1.15"/><path d="M435.18 279.5V648.5" stroke="#ae3136" stroke-width="1.15"/><path d="M453.85 279.5V648.5" stroke="#ae3136" stroke-width="1.15"/><path d="M472.51 279.5V648.5" stroke="#ae3136" stroke-width="1.15"/><path d="M491.18 279.5V648.5" stroke="#ae3136" stroke-width="1.15"/><path d="M509.85 279.5V648.5" stroke="#ae3136" stroke-width="1.15"/><path d="M528.52 279.5V648.5" stroke="#ae3136" stroke-width="1.15"/><path d="M547.19 279.5V648.5" stroke="#ae3136" stroke-width="1.15"/><path d="M565.85 279.5V648.5" stroke="#ae3136" stroke-width="1.15"/><path d="M584.52 279.5V648.5" stroke="#ae3136" stroke-width="1.15"/><path d="M603.19 279.5V648.5" stroke="#ae3136" stroke-width="1.15"/><path d="M621.86 279.5V648.5" stroke="#ae3136" stroke-width="1.15"/><path d="M640.52 279.5V648.5" stroke="#ae3136" stroke-width="1.15"/><path d="M659.19 279.5V648.5" stroke="#ae3136" stroke-width="1.15"/><path d="M677.86 279.5V648.5" stroke="#ae3136" stroke-width="1.15"/><path d="M696.53 279.5V648.5" stroke="#ae3136" stroke-width="1.15"/><path d="M715.19 279.5V648.5" stroke="#ae3136" stroke-width="1.15"/><path d="M733.86 279.5V648.5" stroke="#ae3136" stroke-width="1.15"/><path d="M752.53 279.5V648.5" stroke="#ae3136" stroke-width="1.15"/><path d="M771.19 279.5V648.5" stroke="#ae3136" stroke-width="1.15"/><path d="M789.86 279.5V648.5" stroke="#ae3136" stroke-width="1.15"/><path d="M808.53 279.5V648.5" stroke="#ae3136" stroke-width="1.15"/><path d="M827.20 279.5V648.5" stroke="#ae3136" stroke-width="1.15"/><path d="M845.87 279.5V648.5" stroke="#ae3136" stroke-width="1.15"/><path d="M864.53 279.5V648.5" stroke="#ae3136" stroke-width="1.15"/><path d="M138.3 296.20H881.2" stroke="#ae3136" stroke-width="1.05"/><path d="M138.3 314.88H881.2" stroke="#ae3136" stroke-width="1.05"/><path d="M138.3 333.55H881.2" stroke="#ae3136" stroke-width="1.05"/><path d="M138.3 352.23H881.2" stroke="#ae3136" stroke-width="1.05"/><path d="M138.3 370.90H881.2" stroke="#ae3136" stroke-width="1.05"/><path d="M138.3 389.57H881.2" stroke="#ae3136" stroke-width="1.05"/><path d="M138.3 408.25H881.2" stroke="#ae3136" stroke-width="1.05"/><path d="M138.3 426.92H881.2" stroke="#ae3136" stroke-width="1.05"/><path d="M138.3 445.60H881.2" stroke="#ae3136" stroke-width="1.05"/><path d="M138.3 464.27H881.2" stroke="#ae3136" stroke-width="1.05"/><path d="M138.3 482.95H881.2" stroke="#ae3136" stroke-width="1.05"/><path d="M138.3 501.62H881.2" stroke="#ae3136" stroke-width="1.05"/><path d="M138.3 520.30H881.2" stroke="#ae3136" stroke-width="1.05"/><path d="M138.3 538.98H881.2" stroke="#ae3136" stroke-width="1.05"/><path d="M138.3 557.65H881.2" stroke="#ae3136" stroke-width="1.05"/><path d="M138.3 576.33H881.2" stroke="#ae3136" stroke-width="1.05"/><path d="M138.3 595.00H881.2" stroke="#ae3136" stroke-width="1.05"/><path d="M138.3 613.67H881.2" stroke="#ae3136" stroke-width="1.05"/><path d="M138.3 632.35H881.2" stroke="#ae3136" stroke-width="1.05"/><path d="M138.3 281.0H881.2" stroke="#b0242a" stroke-width="1.7"/><path d="M138.3 628.6H881.2" stroke="#b0242a" stroke-width="1.9"/><path d="M138.3 637.9H881.2" stroke="#b0242a" stroke-width="1.9"/><path d="M138.3 647.5H881.2" stroke="#b0242a" stroke-width="1.9"/><path d="M136.3 651.2V277.6H883.2V651.2" fill="none" stroke="#111" stroke-width="1.8"/><path d="M136.3 651.2H883.2" stroke="#3a3a3a" stroke-width="1.8"/><rect x="136" y="651.2" width="38.2" height="6.6" fill="#0a0a6e"/><path d="M155.1 658L174 683.3H136.2z" fill="none" stroke="#0a0a6e" stroke-width="1.3"/><rect x="845.4" y="651.2" width="38.2" height="6.8" fill="#0a0a6e"/><path d="M864.5 658L883.4 683.3H845.6z" fill="none" stroke="#0a0a6e" stroke-width="1.3"/><path d="M845.6 689.3H883.4" stroke="#3a3a8a" stroke-width="1.1"/><path d="M510 202.5V249" stroke="#2e9a2e" stroke-width="1.3"/><path d="M503.6 248.3H516L510 277.5z" fill="#0a7a0a"/><text x="509.5" y="201" font-family="Liberation Sans" font-size="7.6" font-weight="bold" fill="#2a9a2a" textLength="27.5" lengthAdjust="spacingAndGlyphs">-1000.0</text><text x="61.6" y="653.6" text-anchor="end" font-family="Liberation Sans" font-size="7" fill="#222" textLength="13" lengthAdjust="spacingAndGlyphs">0.00</text><text x="61.6" y="529.0" text-anchor="end" font-family="Liberation Sans" font-size="7" fill="#222" textLength="13" lengthAdjust="spacingAndGlyphs">1.00</text><text x="61.6" y="404.4" text-anchor="end" font-family="Liberation Sans" font-size="7" fill="#222" textLength="13" lengthAdjust="spacingAndGlyphs">2.00</text><text x="61.6" y="279.8" text-anchor="end" font-family="Liberation Sans" font-size="7" fill="#222" textLength="13" lengthAdjust="spacingAndGlyphs">3.00</text><text x="136.3" y="731.8" text-anchor="middle" font-family="Liberation Sans" font-size="7" fill="#222">0.00</text><text x="260.8" y="731.8" text-anchor="middle" font-family="Liberation Sans" font-size="7" fill="#222">1.00</text><text x="385.2" y="731.8" text-anchor="middle" font-family="Liberation Sans" font-size="7" fill="#222">2.00</text><text x="509.7" y="731.8" text-anchor="middle" font-family="Liberation Sans" font-size="7" fill="#222">3.00</text><text x="634.1" y="731.8" text-anchor="middle" font-family="Liberation Sans" font-size="7" fill="#222">4.00</text><text x="758.5" y="731.8" text-anchor="middle" font-family="Liberation Sans" font-size="7" fill="#222">5.00</text><text x="883.0" y="731.8" text-anchor="middle" font-family="Liberation Sans" font-size="7" fill="#222">6.00</text></g></svg>
<svg class="a" style="left:860px;top:113px" width="168" height="18" fill="none">
<circle cx="14" cy="8.8" r="4.1" stroke="#444" stroke-width="1.1"/>
<path d="M17 11.8l3.5 3.5" stroke="#444" stroke-width="1.3"/>
<path d="M28.5 8l2.2 2.2 2.2-2.2" stroke="#555" stroke-width="1"/>
<path d="M36.5 1v16" stroke="#cfcfcf" stroke-width="1"/>
<rect x="42.5" y="4.5" width="11" height="9.5" rx="1.5" stroke="#444" stroke-width="1.3"/>
<text x="44.3" y="11.9" font-family="Liberation Sans" font-size="5.5" font-weight="bold" fill="#333">2D</text>
<path d="M60.5 8l2.2 2.2 2.2-2.2" stroke="#555" stroke-width="1"/>
<path d="M69 1v16" stroke="#cfcfcf" stroke-width="1"/>
<rect x="70.5" y="0" width="19" height="18" fill="#e6e6e6"/>
<path d="M74.5 6.5h7.5v8h-7.5z M74.5 6.5l3.3-3h7.6v8l-3.4 3 M82 6.5l3.4-3 M77.8 3.5v8h7.6" stroke="#666" stroke-width="0.9"/>
<path d="M94 6.5h7.5v8.2h-7.5z" fill="#555" stroke="#555" stroke-width="0.9"/>
<path d="M94 6.5l3.3-3h7.5l-3.3 3z" fill="#777"/>
<path d="M101.5 6.5l3.3-3v8.2l-3.3 3z" fill="#444"/>
<path d="M109.6 1v16" stroke="#cfcfcf" stroke-width="1"/>
<path d="M115.3 6.3l3 1.3v6l-3-1.5z M115.3 6.3l3.2-1.3 7.8 0.3-8 2.3 M118.3 13.6l8-4V5.3" stroke="#666" stroke-width="0.9" stroke-linejoin="round"/>
<path d="M134.3 9L139.5 4.5L144.7 9H143.2V14.5H141.1V10.2H137.9V14.5H135.8V9Z" stroke="#9a9a9a" stroke-width="0.9" stroke-linejoin="round"/>
<path d="M152.3 3.8h3.2l-3.2 3.2z M164.2 3.8h-3.2l3.2 3.2z M152.3 14.5h3.2l-3.2-3.2z M164.2 14.5h-3.2l3.2-3.2z" fill="#111"/><path d="M153.5 5l2.4 2.4 M163 5l-2.4 2.4 M153.5 13.3l2.4-2.4 M163 13.3l-2.4-2.4" stroke="#111" stroke-width="1.1"/>
</svg>
<svg class="a" style="left:898.7px;top:208.9px" width="6" height="6"><path d="M4.6 0.8V4.8H0.6z" fill="#333"/></svg>
<div class="a" style="left:911.2px;top:206.70000000000002px;font-size:8.5px;color:#3a3a3a;line-height:10.62px;white-space:nowrap;">DRM2</div>
<svg class="a" style="left:912.6px;top:224.67000000000002px" width="6" height="6"><path d="M4.6 0.8V4.8H0.6z" fill="#333"/></svg>
<div class="a" style="left:926.1px;top:222.37px;font-size:8.3px;color:#3a3a3a;line-height:10.38px;white-space:nowrap;font-weight:bold;">Members</div>
<div class="a" style="left:925.1px;top:238.24px;font-size:8.5px;color:#555;line-height:10.62px;white-space:nowrap;">W1</div>
<svg class="a" style="left:912.6px;top:256.21000000000004px" width="6" height="6"><path d="M4.6 0.8V4.8H0.6z" fill="#333"/></svg>
<div class="a" style="left:926.1px;top:253.91000000000003px;font-size:8.3px;color:#3a3a3a;line-height:10.38px;white-space:nowrap;font-weight:bold;">Supports</div>
<div class="a" style="left:925.1px;top:269.78000000000003px;font-size:8.5px;color:#555;line-height:10.62px;white-space:nowrap;">PS1</div>
<div class="a" style="left:925.1px;top:285.55px;font-size:8.5px;color:#555;line-height:10.62px;white-space:nowrap;">PS2</div>
<svg class="a" style="left:912.6px;top:303.52px" width="6" height="6"><path d="M4.6 0.8V4.8H0.6z" fill="#333"/></svg>
<div class="a" style="left:926.1px;top:301.21999999999997px;font-size:8.3px;color:#3a3a3a;line-height:10.38px;white-space:nowrap;font-weight:bold;">Loads and Combin...</div>
<svg class="a" style="left:927.1px;top:319.29px" width="6" height="6"><path d="M4.6 0.8V4.8H0.6z" fill="#333"/></svg>
<div class="a" style="left:940.6px;top:316.99px;font-size:8.3px;color:#3a3a3a;line-height:10.38px;white-space:nowrap;font-weight:bold;">Load cases</div>
<div class="a" style="left:939.6px;top:332.86px;font-size:8.5px;color:#555;line-height:10.62px;white-space:nowrap;">LC1</div>
<div class="a" style="left:939.6px;top:348.63000000000005px;font-size:8.5px;color:#555;line-height:10.62px;white-space:nowrap;">LC2</div>
<svg class="a" style="left:927.1px;top:366.6px" width="6" height="6"><path d="M4.6 0.8V4.8H0.6z" fill="#333"/></svg>
<div class="a" style="left:940.6px;top:364.3px;font-size:8.3px;color:#3a3a3a;line-height:10.38px;white-space:nowrap;font-weight:bold;">ULS Combinations</div>
<div class="a" style="left:940.5px;top:380.87px;width:8px;height:8px;background:#e9e9e9"></div><svg class="a" style="left:940.5px;top:378.37px" width="12" height="12"><path d="M1.8 6.8l2.4 2.8 5.3-7.3" stroke="#f08a1a" stroke-width="1.6" fill="none"/></svg>
<div class="a" style="left:956.2px;top:380.27px;font-size:8.6px;color:#555;line-height:10.75px;white-space:nowrap;">C1</div>
<svg class="a" style="left:927.1px;top:398.14px" width="6" height="6"><path d="M4.6 0.8V4.8H0.6z" fill="#333"/></svg>
<div class="a" style="left:940.6px;top:395.84px;font-size:8.3px;color:#3a3a3a;line-height:10.38px;white-space:nowrap;font-weight:bold;">SLS Combinations</div>
<div class="a" style="left:940.5px;top:412.40999999999997px;width:8px;height:8px;background:#e9e9e9"></div><svg class="a" style="left:940.5px;top:409.90999999999997px" width="12" height="12"><path d="M1.8 6.8l2.4 2.8 5.3-7.3" stroke="#f08a1a" stroke-width="1.6" fill="none"/></svg>
<div class="a" style="left:956.2px;top:411.80999999999995px;font-size:8.6px;color:#555;line-height:10.75px;white-space:nowrap;">C2</div>
<svg class="a" style="left:936px;top:424.6px" width="80" height="16"><path d="M0.2 0H67.5L79 7.5L67.5 15.2H0.2z" fill="#f07022"/></svg>
<div class="a" style="left:940.5px;top:428.18px;width:8px;height:8px;background:#e4ebf0"></div><svg class="a" style="left:940.5px;top:425.68px" width="12" height="12"><path d="M1.8 6.8l2.4 2.8 5.3-7.3" stroke="#f08a1a" stroke-width="1.6" fill="none"/></svg>
<div class="a" style="left:956.2px;top:427.58px;font-size:8.4px;color:#fff;line-height:10.50px;white-space:nowrap;">C3</div>
<div class="a" style="left:940.5px;top:443.95px;width:8px;height:8px;background:#e9e9e9"></div><svg class="a" style="left:940.5px;top:441.45px" width="12" height="12"><path d="M1.8 6.8l2.4 2.8 5.3-7.3" stroke="#f08a1a" stroke-width="1.6" fill="none"/></svg>
<div class="a" style="left:956.2px;top:443.34999999999997px;font-size:8.6px;color:#555;line-height:10.75px;white-space:nowrap;">C4</div>
<svg class="a" style="left:912.6px;top:461.22px" width="6" height="6"><path d="M4.6 0.8V4.8H0.6z" fill="#333"/></svg>
<div class="a" style="left:926.1px;top:458.92px;font-size:8.3px;color:#3a3a3a;line-height:10.38px;white-space:nowrap;font-weight:bold;">Reinforcements</div>
<svg class="a" style="left:927.1px;top:476.99px" width="6" height="6"><path d="M4.6 0.8V4.8H0.6z" fill="#333"/></svg>
<div class="a" style="left:940.6px;top:474.69px;font-size:8.3px;color:#3a3a3a;line-height:10.38px;white-space:nowrap;font-weight:bold;">Group of Bars</div>
<div class="a" style="left:940.5px;top:491.26px;width:8px;height:8px;background:#e9e9e9"></div><svg class="a" style="left:940.5px;top:488.76px" width="12" height="12"><path d="M1.8 6.8l2.4 2.8 5.3-7.3" stroke="#f08a1a" stroke-width="1.6" fill="none"/></svg>
<div class="a" style="left:956.2px;top:490.65999999999997px;font-size:8.6px;color:#555;line-height:10.75px;white-space:nowrap;">GB1</div>
<div class="a" style="left:940.5px;top:507.03px;width:8px;height:8px;background:#e9e9e9"></div><svg class="a" style="left:940.5px;top:504.53px" width="12" height="12"><path d="M1.8 6.8l2.4 2.8 5.3-7.3" stroke="#f08a1a" stroke-width="1.6" fill="none"/></svg>
<div class="a" style="left:956.2px;top:506.42999999999995px;font-size:8.6px;color:#555;line-height:10.75px;white-space:nowrap;">GB2</div>
<svg class="a" style="left:927.1px;top:524.3px" width="6" height="6"><path d="M4.6 0.8V4.8H0.6z" fill="#333"/></svg>
<div class="a" style="left:940.6px;top:522.0px;font-size:8.3px;color:#3a3a3a;line-height:10.38px;white-space:nowrap;font-weight:bold;">Wire Fabrics</div>
<div class="a" style="left:940.5px;top:538.57px;width:8px;height:8px;background:#e9e9e9"></div><svg class="a" style="left:940.5px;top:536.07px" width="12" height="12"><path d="M1.8 6.8l2.4 2.8 5.3-7.3" stroke="#f08a1a" stroke-width="1.6" fill="none"/></svg>
<div class="a" style="left:956.2px;top:537.97px;font-size:8.6px;color:#555;line-height:10.75px;white-space:nowrap;">WF1</div>
<div class="a" style="left:0;top:112px;width:1367px;height:1px;background:#d8d8d8"></div>
<div class="a" style="left:1028px;top:113px;width:5px;height:687px;background:#d0d0d0"></div>
<div class="a" style="left:1033px;top:113px;width:334px;height:18px;background:#f07022"></div>
<div class="a" style="left:1040px;top:116.5px;font-size:8.6px;color:#fff;line-height:10.75px;white-space:nowrap;font-weight:bold;">C3</div>
<div class="a" style="left:1057px;top:116.5px;font-size:8.6px;color:#fff;line-height:10.75px;white-space:nowrap;letter-spacing:0.2px">[ Combination ]</div>
<div class="a" style="left:1265px;top:116.5px;font-size:8.6px;color:#fff;line-height:10.75px;white-space:nowrap;font-weight:bold;">New</div>
<div class="a" style="left:1297px;top:116.5px;font-size:8.6px;color:#fff;line-height:10.75px;white-space:nowrap;font-weight:bold;">Copy</div>
<div class="a" style="left:1331px;top:116.5px;font-size:8.6px;color:#fff;line-height:10.75px;white-space:nowrap;font-weight:bold;">Delete</div>
<div class="a" style="left:1043.5px;top:143px;font-size:9.2px;color:#f07022;line-height:11.50px;white-space:nowrap;font-weight:bold;">Properties</div>
<svg class="a" style="left:1045px;top:161.5px" width="8" height="6"><path d="M1 1.5l3 3 3-3" stroke="#f07022" stroke-width="1" fill="none"/></svg>
<div class="a" style="left:1057.5px;top:159.8px;font-size:8.4px;color:#3a3a3a;line-height:10.50px;white-space:nowrap;font-weight:bold;">Limit state</div>
<div class="a" style="left:1057.5px;top:176.8px;font-size:8.5px;color:#444;line-height:10.62px;white-space:nowrap;">Selection of limit state</div>
<div class="a" style="left:1057.5px;top:194px;font-size:8.6px;color:#444;line-height:10.75px;white-space:nowrap;">Active for the crack width check</div>
<div class="a" style="left:1057.5px;top:211.3px;font-size:8.6px;color:#444;line-height:10.75px;white-space:nowrap;">Active for the deflection check</div>
<svg class="a" style="left:1045px;top:238.7px" width="8" height="6"><path d="M1 1.5l3 3 3-3" stroke="#f07022" stroke-width="1" fill="none"/></svg>
<div class="a" style="left:1057.5px;top:237.3px;font-size:8.3px;color:#3a3a3a;line-height:10.38px;white-space:nowrap;font-weight:bold;">Combination</div>
<div class="a" style="left:1057.5px;top:254.4px;font-size:8.7px;color:#444;line-height:10.88px;white-space:nowrap;">Combination rule</div>
<div class="a" style="left:1186.5px;top:253.7px;font-size:8.6px;color:#444;line-height:10.75px;white-space:nowrap;">LC1</div>
<div class="a" style="left:1186px;top:174px;width:178px;height:15px;border:1px solid #d6d6d6;background:#fff"></div>
<div class="a" style="left:1208px;top:174px;width:22px;height:15px;background:#f07022"></div>
<div class="a" style="left:1189px;top:176.5px;font-size:8.5px;color:#555;line-height:10.62px;white-space:nowrap;">ULS</div>
<div class="a" style="left:1211px;top:176.5px;font-size:8.5px;color:#fff;line-height:10.62px;white-space:nowrap;">SLS</div>
<div class="a" style="left:1234px;top:176.5px;font-size:8.5px;color:#222;line-height:10.62px;white-space:nowrap;">Quasi-permanent</div>
<svg class="a" style="left:1352px;top:178px" width="9" height="6"><path d="M1 1l3.5 3.5L8 1" stroke="#444" stroke-width="1" fill="none"/></svg>
<div class="a" style="left:1186px;top:195.0px;width:9px;height:9px;background:#eeeeee"></div><svg class="a" style="left:1186px;top:195.0px" width="10" height="10"><path d="M2.2 5l2 2 3.8-4" stroke="#f07022" stroke-width="1.2" fill="none"/></svg>
<div class="a" style="left:1186px;top:212.3px;width:9px;height:9px;background:#eeeeee"></div><svg class="a" style="left:1186px;top:212.3px" width="10" height="10"><path d="M2.2 5l2 2 3.8-4" stroke="#f07022" stroke-width="1.2" fill="none"/></svg>
<div class="a" style="left:1040.6px;top:190.7px;width:172.8px;height:34px;border:2px solid #ee2a33;border-radius:4px"></div>
<svg class="a" style="left:1349px;top:251px" width="16" height="16"><path d="M3 13l1-3.5 7.3-7.3 2.5 2.5L6.5 12z M10 3.5l2.5 2.5 M3 13l3.5-1" stroke="#444" stroke-width="1.1" fill="none" stroke-linejoin="round"/></svg>
</body></html>
